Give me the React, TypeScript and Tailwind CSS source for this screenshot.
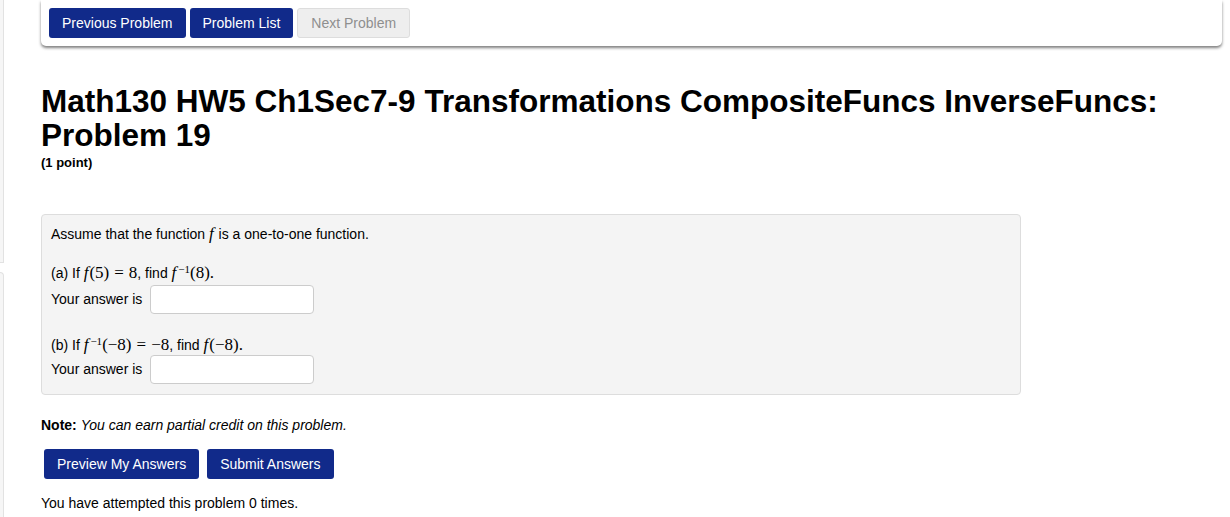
import React from "react";

const serif = { fontFamily: '"Liberation Serif", "DejaVu Serif", serif' };
const F = () => <span className="italic mr-[1px]" style={serif}>f</span>;
const M = ({ children }: { children: React.ReactNode }) => (
  <span className="text-[17px]" style={serif}>{children}</span>
);
const Eq = () => <span className="mx-[5px]">=</span>;
const Inv = () => <sup className="text-[11px] ml-[1px]">−1</sup>;

const btn = "rounded-[3px] bg-[#112a8a] text-white text-[14px]";

export default function App() {
  return (
    <div className="flex w-[1230px] h-[517px] overflow-hidden bg-white text-black font-['Liberation_Sans',Arial,sans-serif]">
      <div className="flex flex-col w-[4px] shrink-0 gap-[9px]">
        <div className="h-[263px] bg-[#f6f6f6] border-r border-b border-[#e2e2e2]" />
        <div className="flex-1 bg-[#f6f6f6] border-r border-t border-[#e2e2e2] rounded-tr-[4px]" />
      </div>
      <div className="flex-1 pl-[37px] pr-[8px]">
        <div className="bg-white rounded-b-[5px] shadow-[0_2px_3px_rgba(0,0,0,0.5)] px-[8px] pt-[8px] pb-[8px] flex gap-[4px]">
          <button className={`h-[30px] px-[13px] ${btn}`}>Previous Problem</button>
          <button className={`h-[30px] px-[13px] ${btn}`}>Problem List</button>
          <button className="h-[30px] px-[13px] rounded-[3px] bg-[#eeeeee] border border-[#dddddd] text-[#8f8f8f] text-[14px]">Next Problem</button>
        </div>
        <h1 className="mt-[38px] text-[31.5px] leading-[34px] font-bold">
          Math130 HW5 Ch1Sec7-9 Transformations CompositeFuncs InverseFuncs:<br />Problem 19
        </h1>
        <div className="text-[13px] font-bold leading-[16px] mt-[3px]">(1 point)</div>
        <div className="mt-[43px] w-[980px] bg-[#f4f4f4] border border-[#dddddd] rounded-[4px] px-[9px] pt-[9px] pb-[10px] text-[14px]">
          <div className="leading-[20px]">Assume that the function <M><F /></M> is a one-to-one function.</div>
          <div className="mt-[19px] leading-[20px]">
            (a) If <M><F />(5)<Eq />8</M>, find <M><F /><Inv />(8).</M>
          </div>
          <div className="flex items-center gap-[8px] mt-[2px]">
            <span>Your answer is</span>
            <input className="w-[164px] h-[29px] bg-white border border-[#cccccc] rounded-[4px]" />
          </div>
          <div className="mt-[21px] leading-[20px]">
            (b) If <M><F /><Inv />(−8)<Eq />−8</M>, find <M><F />(−8).</M>
          </div>
          <div className="flex items-center gap-[8px] mt-[0px]">
            <span>Your answer is</span>
            <input className="w-[164px] h-[29px] bg-white border border-[#cccccc] rounded-[4px]" />
          </div>
        </div>
        <div className="mt-[21px] text-[14px] leading-[18px]">
          <b>Note:</b> <i>You can earn partial credit on this problem.</i>
        </div>
        <div className="mt-[15px] flex gap-[8px] pl-[3px]">
          <button className={`h-[30px] px-[13px] ${btn}`}>Preview My Answers</button>
          <button className={`h-[30px] px-[13px] ${btn}`}>Submit Answers</button>
        </div>
        <div className="mt-[15px] text-[14px] leading-[18px]">You have attempted this problem 0 times.</div>
      </div>
    </div>
  );
}
